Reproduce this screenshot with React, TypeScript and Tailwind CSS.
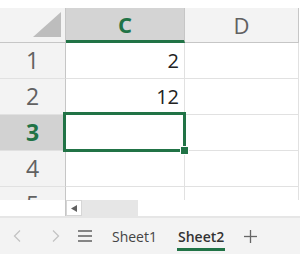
import React from "react";

const GREEN = "#217346";

type Row = { n: number; c?: string; sel?: boolean; h: string };

const rows: Row[] = [
  { n: 1, c: "2", h: "h-[36px]" },
  { n: 2, c: "12", h: "h-[36px]" },
  { n: 3, sel: true, h: "h-[36px]" },
  { n: 4, h: "h-[36px]" },
  { n: 5, h: "h-[36px]" },
];

function SheetRow({ row }: { row: Row }) {
  return (
    <div className={`flex ${row.h} shrink-0`}>
      <div
        className={`w-[66px] shrink-0 flex items-center justify-center border-r border-b border-r-[#c6c6c6] border-b-[#e1e1e1] text-[23px] ${
          row.sel ? "bg-[#d2d2d2] text-[#217346] font-bold" : "bg-[#f3f3f3] text-[#616161]"
        }`}
      >
        {row.n}
      </div>
      <div className="w-[119px] shrink-0 flex items-center justify-end pr-[5px] border-r border-b border-[#e1e1e1] text-[20px] text-[#222]">
        {row.c}
      </div>
      <div className="w-[114px] shrink-0 border-r border-b border-[#e1e1e1]" />
    </div>
  );
}

export default function App() {
  return (
    <div
      className="w-[300px] h-[254px] bg-white overflow-hidden flex flex-col relative"
      style={{ fontFamily: "'Open Sans', 'Noto Sans', sans-serif" }}
    >
      <div className="h-[8px] shrink-0" />

      {/* grid */}
      <div className="h-[192px] shrink-0 overflow-hidden flex flex-col">
        <div className="flex h-[35px] shrink-0">
          <div className="w-[66px] shrink-0 bg-[#f3f3f3] border-r border-b border-[#c6c6c6] flex items-end justify-end pr-[4px] pb-[5px]">
            <svg width="28" height="25" viewBox="0 0 28 25">
              <polygon points="28,0 28,25 0,25" fill="#bdbdbd" />
            </svg>
          </div>
          <div className="w-[119px] shrink-0 bg-[#d4d4d4] border-r border-[#c6c6c6] border-b-[3px] border-b-[#217346] flex items-center justify-center text-[22px] font-bold text-[#217346] leading-none">
            C
          </div>
          <div className="w-[114px] shrink-0 bg-[#f3f3f3] border-r border-b border-[#c6c6c6] flex items-center justify-center text-[22px] text-[#616161] leading-none">
            D
          </div>
        </div>
        {rows.map((r) => (
          <SheetRow key={r.n} row={r} />
        ))}
      </div>

      {/* scroll bar */}
      <div className="h-[16px] shrink-0 flex">
        <div className="w-[66px] shrink-0 border-r border-[#c6c6c6]" />
        <div className="w-[16px] shrink-0 border border-[#d6d6d6] bg-white flex items-center justify-center">
          <svg width="6" height="7" viewBox="0 0 6 7">
            <polygon points="6,0 6,7 0,3.5" fill="#616161" />
          </svg>
        </div>
        <div className="w-[56px] shrink-0 bg-[#e6e6e6]" />
      </div>

      {/* sheet tabs */}
      <div className="flex-1 border-t-2 border-[#e6e6e6] bg-[#f3f3f3] flex items-center text-[#444]">
        <div className="w-[40px] shrink-0 flex justify-end pr-[19px]">
          <svg width="8" height="12" viewBox="0 0 8 12" fill="none" stroke="#c3c3c3" strokeWidth="1.3">
            <polyline points="7,0.5 1.5,6 7,11.5" />
          </svg>
        </div>
        <div className="w-[34px] shrink-0 flex justify-center pr-[9px] pl-[6px]">
          <svg width="8" height="12" viewBox="0 0 8 12" fill="none" stroke="#c3c3c3" strokeWidth="1.3">
            <polyline points="1,0.5 6.5,6 1,11.5" />
          </svg>
        </div>
        <div className="w-[38px] shrink-0 flex justify-start pl-[4px]">
          <svg width="14" height="12" viewBox="0 0 14 12" stroke="#555" strokeWidth="1.4">
            <line x1="0" y1="1" x2="14" y2="1" />
            <line x1="0" y1="6" x2="14" y2="6" />
            <line x1="0" y1="11" x2="14" y2="11" />
          </svg>
        </div>
        <div className="w-[66px] shrink-0 text-[14px] text-[#444]">Sheet1</div>
        <div className="w-[66px] shrink-0 relative h-full flex items-center">
          <span className="text-[14px] font-semibold text-[#333]">Sheet2</span>
          <div className="absolute left-[-1px] w-[48px] bottom-[3px] h-[3px] bg-[#217346]" />
        </div>
        <svg width="13" height="13" viewBox="0 0 13 13" stroke="#666" strokeWidth="1.3">
          <line x1="6.5" y1="0" x2="6.5" y2="13" />
          <line x1="0" y1="6.5" x2="13" y2="6.5" />
        </svg>
      </div>

      {/* selection */}
      <div
        className="absolute left-[63px] top-[112px] w-[123px] h-[40px] border-[3px]"
        style={{ borderColor: GREEN }}
      />
      <div className="absolute left-[180px] top-[146px] w-[9px] h-[9px] bg-[#217346] border border-white" />
    </div>
  );
}
